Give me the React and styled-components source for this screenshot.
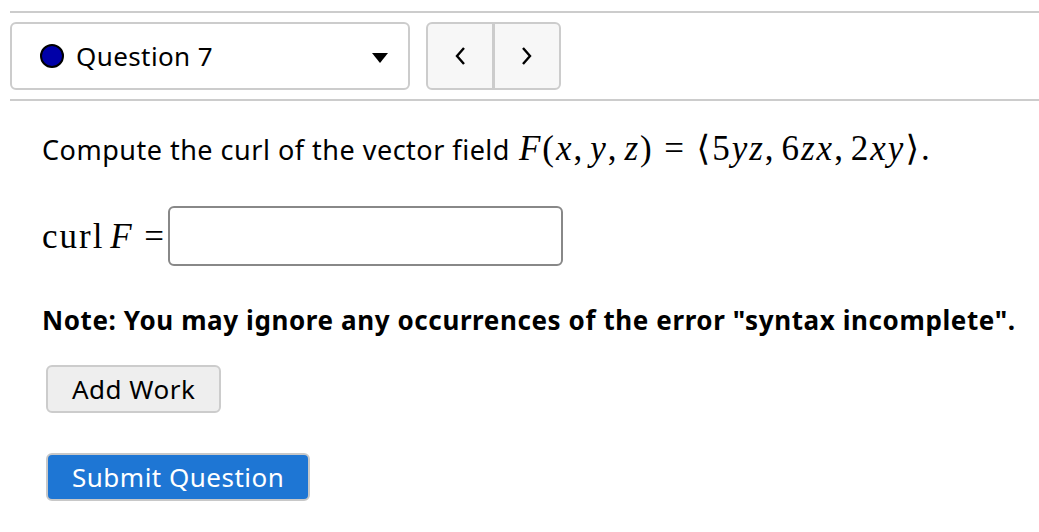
import React from "react";
import styled, { createGlobalStyle } from "styled-components";

const Global = createGlobalStyle`
  html, body { margin: 0; padding: 0; background: #fff; }
  body { font-family: "Noto Sans", "Open Sans", sans-serif; color: #000; }
`;

const Page = styled.div`
  padding: 11px 0 0 10px;
`;

const NavBar = styled.div`
  display: flex;
  align-items: stretch;
  gap: 16px;
  border-top: 2px solid #ccc;
  border-bottom: 2px solid #ccc;
  padding: 9px 0 9px 0;
`;

const Select = styled.div`
  box-sizing: border-box;
  width: 400px;
  height: 68px;
  border: 2px solid #ccc;
  border-radius: 6px;
  display: flex;
  align-items: center;
  padding: 0 20px 0 28px;
  font-size: 26px;
  letter-spacing: 0.4px;
`;

const Dot = styled.span`
  box-sizing: border-box;
  width: 24px;
  height: 24px;
  border-radius: 50%;
  background: #0000a8;
  border: 2.5px solid #000;
  margin-right: 12px;
  flex: none;
`;

const Label = styled.span`
  flex: 1;
`;

const Caret = styled.span`
  width: 0;
  height: 0;
  border-left: 8px solid transparent;
  border-right: 8px solid transparent;
  border-top: 10px solid #000;
  margin-top: 4px;
`;

const BtnGroup = styled.div`
  box-sizing: border-box;
  display: flex;
  height: 68px;
  border: 2px solid #ccc;
  border-radius: 6px;
  background: #f7f7f7;
  overflow: hidden;
`;

const NavBtn = styled.div`
  width: 64px;
  display: flex;
  align-items: center;
  justify-content: center;
  border-left: ${(p) => (p.$divider ? "3px solid #ccc" : "none")};
`;

const Content = styled.div`
  padding: 30px 0 0 32px;
`;

const Text = styled.p`
  margin: 0;
  font-size: ${(p) => (p.$bold ? "26px" : "27px")};
  line-height: 34px;
  display: flex;
  align-items: baseline;
  font-weight: ${(p) => (p.$bold ? 700 : 400)};
  letter-spacing: ${(p) => (p.$bold ? "0.6px" : "0.5px")};
  margin-top: ${(p) => p.$mt || 0}px;
`;

const Math = styled.span`
  font-family: "Liberation Serif", "DejaVu Serif", serif;
  font-size: 35px;
  line-height: 1;
  letter-spacing: 2px;
  margin-left: ${(p) => p.$ml || 0}px;
  white-space: pre;
`;

const I = styled.i`
  font-style: italic;
`;

const Rel = styled.span`
  margin: 0 ${(p) => (p.$tight ? "2px" : "0.3em")} 0 0.3em;
`;

const Comma = styled.span`
  margin-right: 0.17em;
`;

const AnswerRow = styled.div`
  display: flex;
  align-items: center;
  margin-top: 39px;
`;

const Input = styled.input`
  box-sizing: border-box;
  width: 395px;
  height: 60px;
  border: 2px solid #888;
  border-radius: 6px;
  font-size: 24px;
`;

const Button = styled.button`
  box-sizing: border-box;
  display: block;
  height: 48px;
  padding: 0 24px;
  font-family: "Noto Sans", "Open Sans", sans-serif;
  font-size: 26px;
  letter-spacing: 0.5px;
  border-radius: 6px;
  border: 2px solid ${(p) => (p.$primary ? "#c8c8c8" : "#ccc")};
  background: ${(p) => (p.$primary ? "#1e76d4" : "#eee")};
  color: ${(p) => (p.$primary ? "#fff" : "#000")};
  margin-left: 4px;
  margin-top: ${(p) => p.$mt}px;
`;

const Chevron = ({ dir }) => (
  <svg width="12" height="20" viewBox="0 0 12 20">
    <path
      d={dir === "left" ? "M10 2 L3 10 L10 18" : "M2 2 L9 10 L2 18"}
      fill="none"
      stroke="#000"
      strokeWidth="2.4"
    />
  </svg>
);

export default function App() {
  return (
    <Page>
      <Global />
      <NavBar>
        <Select>
          <Dot />
          <Label>Question 7</Label>
          <Caret />
        </Select>
        <BtnGroup>
          <NavBtn>
            <Chevron dir="left" />
          </NavBtn>
          <NavBtn $divider>
            <Chevron dir="right" />
          </NavBtn>
        </BtnGroup>
      </NavBar>
      <Content>
        <Text>
          Compute the curl of the vector field
          <Math $ml={9}>
            <I>F</I>(<I>x</I>,<Comma /><I>y</I>,<Comma /><I>z</I>)<Rel>=</Rel>⟨5<I>yz</I>,<Comma />6<I>zx</I>,<Comma />2<I>xy</I>⟩.
          </Math>
        </Text>
        <AnswerRow>
          <Math>
            curl<Comma /><I>F</I>
            <Rel $tight>=</Rel>
          </Math>
          <Input type="text" />
        </AnswerRow>
        <Text $bold $mt={37}>
          Note: You may ignore any occurrences of the error "syntax incomplete".
        </Text>
        <Button $mt={28}>Add Work</Button>
        <Button $primary $mt={40}>
          Submit Question
        </Button>
      </Content>
    </Page>
  );
}
